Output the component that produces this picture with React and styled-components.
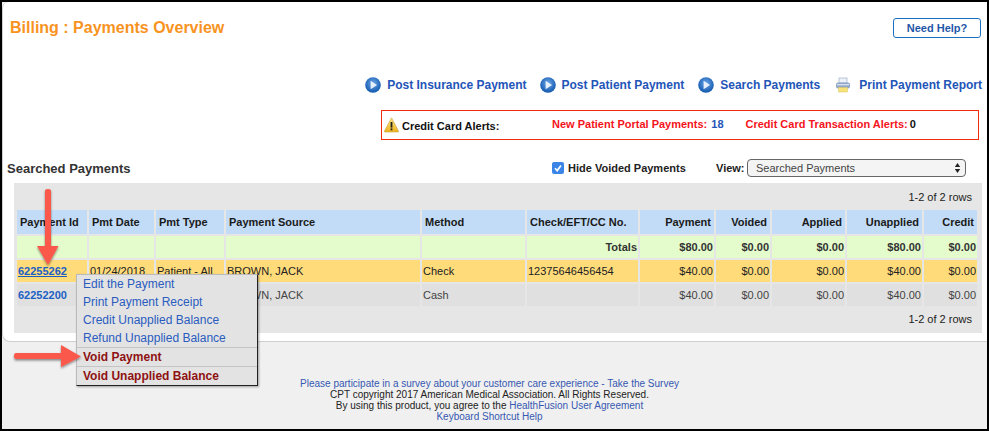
import React from "react";
import styled, { createGlobalStyle } from "styled-components";

const GlobalStyle = createGlobalStyle`
  html, body {
    margin: 0;
    padding: 0;
    background: #000;
  }
  body {
    font-family: "Liberation Sans", Arial, sans-serif;
  }
`;

const Frame = styled.div`
  position: relative;
  box-sizing: border-box;
  width: 989px;
  height: 431px;
  border: 2px solid #000;
  display: flex;
  flex-direction: column;
  background: #f0f0f0;
  overflow: hidden;
`;

const Card = styled.div`
  box-sizing: border-box;
  height: 340px;
  background: #fff;
  border-bottom: 1px solid #cfcfcf;
  border-left: 1px solid #cfcfcf;
  border-radius: 6px 0 0 8px;
  padding-top: 16px;
  display: flex;
  flex-direction: column;
`;

const TitleRow = styled.div`
  display: flex;
  align-items: center;
  justify-content: space-between;
  height: 20px;
  padding: 0 6px 0 7px;
`;

const Title = styled.h1`
  margin: 0;
  font-size: 16px;
  font-weight: bold;
  color: #f7931e;
`;

const HelpButton = styled.button`
  box-sizing: border-box;
  width: 88px;
  height: 20px;
  padding: 0;
  background: #fff;
  border: 1px solid #1b6fc2;
  border-radius: 3px;
  color: #1f57a8;
  font: bold 11px "Liberation Sans", Arial, sans-serif;
`;

const LinksRow = styled.div`
  display: flex;
  justify-content: flex-end;
  align-items: center;
  height: 16px;
  margin-top: 39px;
  padding-right: 5px;
`;

const ActionLink = styled.a`
  display: flex;
  align-items: center;
  gap: ${(p) => (p.$print ? "8px" : "6px")};
  margin-left: ${(p) => p.$gap}px;
  color: #2355b8;
  font-size: 12px;
  font-weight: bold;
  white-space: nowrap;
`;

const AlertBox = styled.div`
  box-sizing: border-box;
  display: flex;
  align-items: center;
  width: 598px;
  height: 30px;
  margin: 17px 8px 0 auto;
  padding-left: 2px;
  border: 1px solid #f02c10;
  font-size: 11px;
  font-weight: bold;
`;

const AlertLabel = styled.span`
  width: 150px;
  margin-left: 3px;
  color: #111;
  position: relative;
  top: 1px;
`;

const AlertText = styled.span`
  margin-left: ${(p) => p.$gap || 0}px;
  margin-bottom: 2px;
  color: ${(p) => p.$color};
`;

const SectionRow = styled.div`
  display: flex;
  align-items: center;
  height: 18px;
  margin-top: 19px;
  padding-left: 4px;
`;

const SectionTitle = styled.h2`
  margin: 0;
  width: 545px;
  font-size: 13px;
  font-weight: bold;
  color: #333;
`;

const FakeCheck = styled.span`
  display: flex;
  align-items: center;
  justify-content: center;
  width: 12px;
  height: 12px;
  margin-right: 4px;
  border-radius: 2px;
  background: #3a85e6;
`;

const CheckLabel = styled.span`
  width: 148px;
  font-size: 11px;
  font-weight: bold;
  color: #222;
`;

const ViewLabel = styled.span`
  width: 31px;
  font-size: 11px;
  font-weight: bold;
  color: #222;
`;

const SelectBox = styled.div`
  box-sizing: border-box;
  display: flex;
  align-items: center;
  justify-content: space-between;
  width: 219px;
  height: 18px;
  padding: 0 4px 0 8px;
  background: #f4f4f4;
  border: 1px solid #666;
  border-radius: 4px;
  font-size: 11px;
  color: #444;
`;

const Panel = styled.div`
  height: 150px;
  margin: 6px 5px 0 11px;
  background: #e6e6e6;
`;

const Pager = styled.div`
  box-sizing: border-box;
  display: flex;
  align-items: center;
  justify-content: flex-end;
  height: 25px;
  padding: ${(p) => (p.$bottom ? "0 10px 4px 0" : "3px 10px 0 0")};
  font-size: 11px;
  color: #222;
`;

const Table = styled.table`
  table-layout: fixed;
  width: 964px;
  margin-left: 1px;
  border-collapse: separate;
  border-spacing: 2px;
  font-size: 11px;
`;

const HeadCell = styled.th`
  box-sizing: border-box;
  height: 24px;
  padding: 0 3px;
  overflow: hidden;
  white-space: nowrap;
  background: #c2dcf7;
  color: #1a1a1a;
  font-weight: bold;
  text-align: ${(p) => (p.$right ? "right" : "left")};
`;

const rowColors = {
  total: { bg: "#e4fccc", fg: "#333" },
  active: { bg: "#ffdb7a", fg: "#222" },
  plain: { bg: "#e0e0e0", fg: "#444" },
};

const Cell = styled.td`
  box-sizing: border-box;
  height: 22px;
  padding: 0 1px;
  overflow: hidden;
  white-space: nowrap;
  background: ${(p) => rowColors[p.$kind].bg};
  color: ${(p) => rowColors[p.$kind].fg};
  font-weight: ${(p) => (p.$kind === "total" ? "bold" : "normal")};
  text-align: ${(p) => (p.$right ? "right" : "left")};
`;

const IdLink = styled.a`
  color: #1c5fc4;
  font-weight: bold;
  text-decoration: ${(p) => (p.$underline ? "underline" : "none")};
`;

const Footer = styled.div`
  flex: 1;
  padding: 36px 10px 0 0;
  text-align: center;
  font-size: 10px;
  line-height: 11px;
  color: #222;
`;

const FooterLine = styled.div`
  white-space: nowrap;
`;

const FooterLink = styled.a`
  color: #3658b0;
`;

const Menu = styled.div`
  position: absolute;
  left: 74px;
  top: 272px;
  box-sizing: border-box;
  width: 182px;
  height: 112px;
  background: #e3e3e3;
  border-top: 1px solid #bbb;
  border-left: 1px solid #bbb;
  border-right: 1px solid #222;
  border-bottom: 1px solid #222;
  box-shadow: 1px 1px 2px rgba(0, 0, 0, 0.35);
  font-size: 12px;
`;

const MenuItem = styled.div`
  display: flex;
  align-items: center;
  height: 18px;
  padding-left: 6px;
  color: #2a5cc0;
`;

const VoidItem = styled.div`
  display: flex;
  align-items: center;
  height: 18px;
  padding-left: 6px;
  border-top: 1px solid #c4c4c4;
  color: #8e1212;
  font-weight: bold;
`;

const ArrowOverlay = styled.svg`
  position: absolute;
  left: -2px;
  top: -2px;
  pointer-events: none;
`;

function PlayIcon() {
  return (
    <svg width="16" height="16" viewBox="0 0 16 16">
      <defs>
        <radialGradient id="playBg" cx="50%" cy="40%" r="60%">
          <stop offset="0%" stopColor="#6fa8e8" />
          <stop offset="100%" stopColor="#0f56ad" />
        </radialGradient>
      </defs>
      <circle cx="8" cy="8" r="7.8" fill="url(#playBg)" />
      <path d="M5.6 3.8 L12 8 L5.6 12.2 Z" fill="#e8f1fb" />
    </svg>
  );
}

function PrinterIcon() {
  return (
    <svg width="16" height="16" viewBox="0 0 16 16">
      <rect x="4" y="1" width="8" height="5" fill="#eef2f8" stroke="#9fb0c8" strokeWidth="0.7" />
      <rect x="1" y="5.5" width="14" height="6" rx="2" fill="#8fa6c8" />
      <rect x="2" y="7" width="12" height="1.4" fill="#d6dfec" />
      <rect x="3.5" y="10.5" width="9" height="4.5" fill="#f7e27a" stroke="#d9c65e" strokeWidth="0.5" />
    </svg>
  );
}

function WarningIcon() {
  return (
    <svg width="15" height="16" viewBox="0 0 15 16">
      <defs>
        <linearGradient id="warnBg" x1="0" y1="0" x2="0" y2="1">
          <stop offset="0%" stopColor="#fbe88a" />
          <stop offset="100%" stopColor="#eeb21e" />
        </linearGradient>
      </defs>
      <path d="M7.5 0.8 L14.6 14.2 Q14.8 15 14 15 L1 15 Q0.2 15 0.4 14.2 Z" fill="url(#warnBg)" stroke="#c9a23c" strokeWidth="0.6" />
      <rect x="6.6" y="5" width="1.8" height="5.6" fill="#222" />
      <rect x="6.6" y="11.4" width="1.8" height="1.9" fill="#222" />
    </svg>
  );
}

function SelectArrows() {
  return (
    <svg width="7" height="12" viewBox="0 0 7 12">
      <path d="M3.5 1 L6.2 5 L0.8 5 Z M3.5 11 L0.8 7 L6.2 7 Z" fill="#222" />
    </svg>
  );
}

function CheckMark() {
  return (
    <svg width="10" height="10" viewBox="0 0 10 10">
      <path d="M2 5.2 L4.2 7.6 L8 2.4" fill="none" stroke="#fff" strokeWidth="1.7" />
    </svg>
  );
}

function Arrows() {
  return (
    <ArrowOverlay width="989" height="431" viewBox="0 0 989 431">
      <defs>
        <filter id="arrowShadow" x="-30%" y="-30%" width="160%" height="160%">
          <feDropShadow dx="0" dy="1.5" stdDeviation="1.2" floodColor="#000" floodOpacity="0.45" />
        </filter>
      </defs>
      <g fill="#f9584c" filter="url(#arrowShadow)">
        <path d="M45 191 Q45 189 48 189 Q51 189 51 191 L51 246 L58.5 246 L48 265 L37 246 L45 246 Z" />
        <path d="M16 353 L61 353 L61 345 L81 356.5 L61 367 L61 359 L16 359 Q14 359 14 356 Q14 353 16 353 Z" />
      </g>
    </ArrowOverlay>
  );
}

const columns = [
  { label: "Payment Id", width: 70 },
  { label: "Pmt Date", width: 65 },
  { label: "Pmt Type", width: 68 },
  { label: "Payment Source", width: 194 },
  { label: "Method", width: 103 },
  { label: "Check/EFT/CC No.", width: 111 },
  { label: "Payment", width: 74, right: true },
  { label: "Voided", width: 54, right: true },
  { label: "Applied", width: 73, right: true },
  { label: "Unapplied", width: 75, right: true },
  { label: "Credit", width: 53, right: true },
];

// the second row's date and type sit under the open menu, so they stay empty
const payments = [
  { id: "62255262", kind: "active", date: "01/24/2018", type: "Patient - All", method: "Check", ref: "12375646456454", underline: true },
  { id: "62252200", kind: "plain", date: "", type: "", method: "Cash", ref: "" },
];

function AmountCells({ kind, payment, unapplied }) {
  return (
    <>
      <Cell $kind={kind} $right>{payment}</Cell>
      <Cell $kind={kind} $right>$0.00</Cell>
      <Cell $kind={kind} $right>$0.00</Cell>
      <Cell $kind={kind} $right>{unapplied}</Cell>
      <Cell $kind={kind} $right>$0.00</Cell>
    </>
  );
}

function App() {
  return (
    <Frame>
      <GlobalStyle />
      <Card>
        <TitleRow>
          <Title>Billing : Payments Overview</Title>
          <HelpButton>Need Help?</HelpButton>
        </TitleRow>
        <LinksRow>
          <ActionLink><PlayIcon />Post Insurance Payment</ActionLink>
          <ActionLink $gap={13}><PlayIcon />Post Patient Payment</ActionLink>
          <ActionLink $gap={14}><PlayIcon />Search Payments</ActionLink>
          <ActionLink $gap={15} $print><PrinterIcon />Print Payment Report</ActionLink>
        </LinksRow>
        <AlertBox>
          <WarningIcon />
          <AlertLabel>Credit Card Alerts:</AlertLabel>
          <AlertText $color="#f4141c">New Patient Portal Payments:</AlertText>
          <AlertText $color="#2355b8" $gap={4}>18</AlertText>
          <AlertText $color="#f4141c" $gap={22}>Credit Card Transaction Alerts:</AlertText>
          <AlertText $color="#111" $gap={2}>0</AlertText>
        </AlertBox>
        <SectionRow>
          <SectionTitle>Searched Payments</SectionTitle>
          <FakeCheck><CheckMark /></FakeCheck>
          <CheckLabel>Hide Voided Payments</CheckLabel>
          <ViewLabel>View:</ViewLabel>
          <SelectBox>
            Searched Payments
            <SelectArrows />
          </SelectBox>
        </SectionRow>
        <Panel>
          <Pager>1-2 of 2 rows</Pager>
          <Table>
            <colgroup>
              {columns.map((c) => (
                <col key={c.label} width={c.width} />
              ))}
            </colgroup>
            <thead>
              <tr>
                {columns.map((c) => (
                  <HeadCell key={c.label} $right={c.right}>{c.label}</HeadCell>
                ))}
              </tr>
            </thead>
            <tbody>
              <tr>
                <Cell $kind="total" />
                <Cell $kind="total" />
                <Cell $kind="total" />
                <Cell $kind="total" />
                <Cell $kind="total" />
                <Cell $kind="total" $right>Totals</Cell>
                <AmountCells kind="total" payment="$80.00" unapplied="$80.00" />
              </tr>
              {payments.map((p) => (
                <tr key={p.id}>
                  <Cell $kind={p.kind}><IdLink $underline={p.underline}>{p.id}</IdLink></Cell>
                  <Cell $kind={p.kind}>{p.date}</Cell>
                  <Cell $kind={p.kind}>{p.type}</Cell>
                  <Cell $kind={p.kind}>BROWN, JACK</Cell>
                  <Cell $kind={p.kind}>{p.method}</Cell>
                  <Cell $kind={p.kind}>{p.ref}</Cell>
                  <AmountCells kind={p.kind} payment="$40.00" unapplied="$40.00" />
                </tr>
              ))}
            </tbody>
          </Table>
          <Pager $bottom>1-2 of 2 rows</Pager>
        </Panel>
      </Card>
      <Footer>
        <FooterLine><FooterLink>Please participate in a survey about your customer care experience - Take the Survey</FooterLink></FooterLine>
        <FooterLine>CPT copyright 2017 American Medical Association. All Rights Reserved.</FooterLine>
        <FooterLine>By using this product, you agree to the <FooterLink>HealthFusion User Agreement</FooterLink></FooterLine>
        <FooterLine><FooterLink>Keyboard Shortcut Help</FooterLink></FooterLine>
      </Footer>
      <Menu>
        <MenuItem>Edit the Payment</MenuItem>
        <MenuItem>Print Payment Receipt</MenuItem>
        <MenuItem>Credit Unapplied Balance</MenuItem>
        <MenuItem>Refund Unapplied Balance</MenuItem>
        <VoidItem>Void Payment</VoidItem>
        <VoidItem>Void Unapplied Balance</VoidItem>
      </Menu>
      <Arrows />
    </Frame>
  );
}

export default App;
